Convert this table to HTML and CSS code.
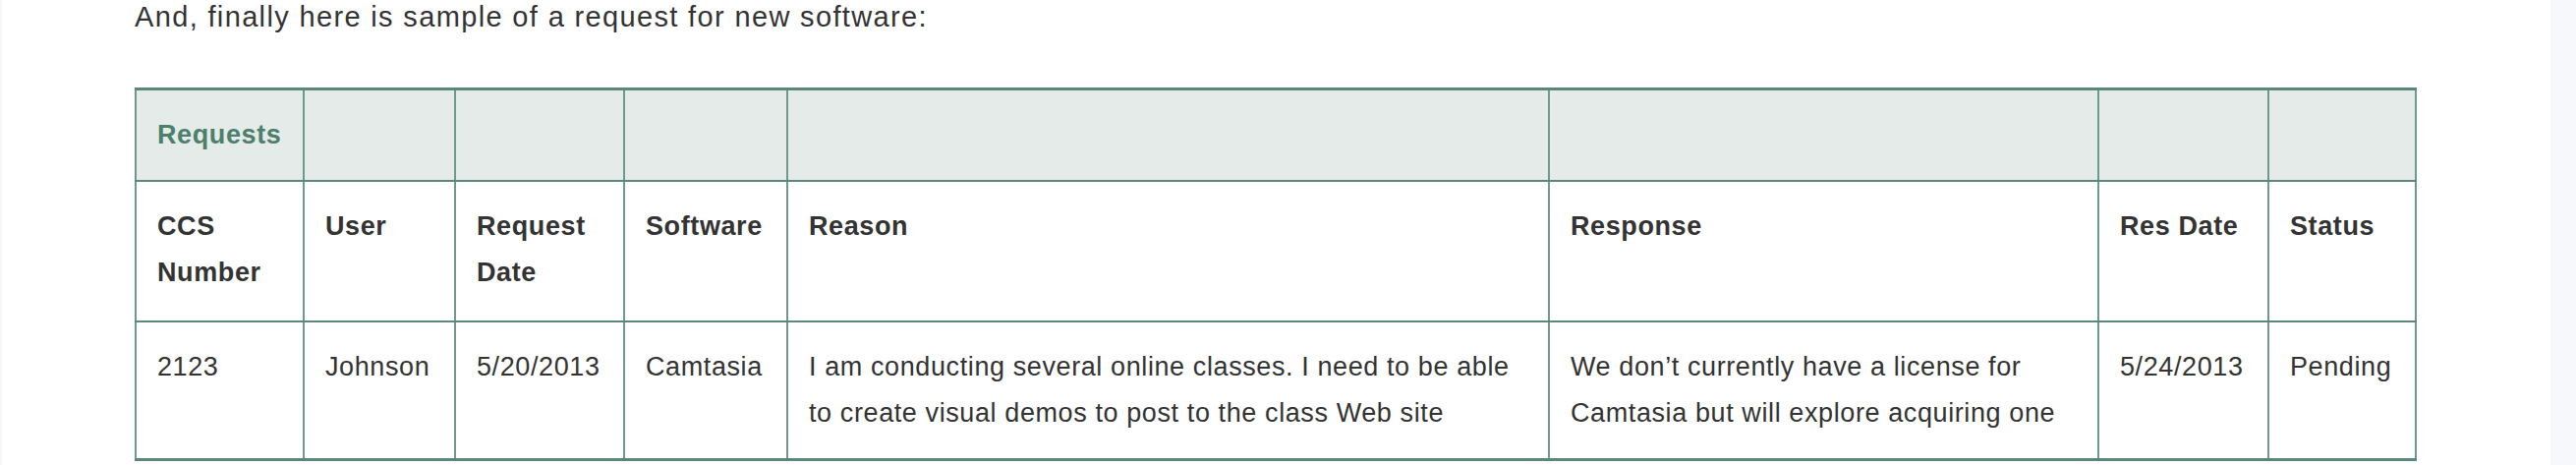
FILE: index.html
```html
<!DOCTYPE html>
<html lang="en">
<head>
<meta charset="utf-8">
<title>Software request sample</title>
<link rel="stylesheet" href="styles.css">
</head>
<body>
<div class="page">
  <main class="content">
    <p class="intro">And, finally here is sample of a request for new software:</p>
    <table class="requests">
      <colgroup>
        <col class="c1"><col class="c2"><col class="c3"><col class="c4">
        <col class="c5"><col class="c6"><col class="c7"><col class="c8">
      </colgroup>
      <thead>
        <tr class="caption-row">
          <th class="caption">Requests</th>
          <th></th><th></th><th></th><th></th><th></th><th></th><th></th>
        </tr>
        <tr class="head-row">
          <th>CCS Number</th>
          <th>User</th>
          <th>Request Date</th>
          <th>Software</th>
          <th>Reason</th>
          <th>Response</th>
          <th>Res Date</th>
          <th>Status</th>
        </tr>
      </thead>
      <tbody>
        <tr>
          <td>2123</td>
          <td>Johnson</td>
          <td>5/20/2013</td>
          <td>Camtasia</td>
          <td>I am conducting several online classes. I need to be able to create visual demos to post to the class Web site</td>
          <td>We don’t currently have a license for Camtasia but will explore acquiring one</td>
          <td>5/24/2013</td>
          <td>Pending</td>
        </tr>
      </tbody>
    </table>
  </main>
  <aside class="rail"></aside>
</div>
</body>
</html>
```

FILE: styles.css
```css
html, body {
  margin: 0;
  padding: 0;
  background: #ffffff;
}

body {
  font-family: "Liberation Sans", Arial, Helvetica, sans-serif;
  color: #333333;
  overflow: hidden;
}

.page {
  display: flex;
  width: 2621px;
  height: 473px;
  border-left: 2px solid #f6f7fb;
  box-sizing: border-box;
}

.content {
  flex: 1;
  padding-left: 135px;
}

.rail {
  width: 26px;
  background: #f7f8fc;
}

.intro {
  margin: -7px 0 0;
  font-size: 29px;
  letter-spacing: 1.35px;
  line-height: 49px;
  color: #333333;
}

.requests {
  margin-top: 47px;
  width: 2320px;
  table-layout: fixed;
  border-collapse: collapse;
  border-top: 3px solid #5b8877;
  border-bottom: 3px solid #5b8877;
  border-left: 2px solid #5b8877;
  border-right: 2px solid #5b8877;
  font-size: 27px;
  letter-spacing: 0.6px;
  line-height: 47px;
}

.c1 { width: 171px; }
.c2 { width: 154px; }
.c3 { width: 172px; }
.c4 { width: 166px; }
.c5 { width: 775px; }
.c6 { width: 559px; }
.c7 { width: 173px; }
.c8 { width: 150px; }

.requests th,
.requests td {
  padding: 22px 14px 22px 21px;
  text-align: left;
  vertical-align: top;
  border-left: 2px solid #6f998a;
  border-right: 2px solid #6f998a;
  border-top: 2px solid #5b8877;
  border-bottom: 2px solid #5b8877;
  color: #333333;
}

.requests th {
  font-weight: bold;
}

.requests td {
  font-weight: normal;
  padding-bottom: 22px;
}

.head-row th {
  padding-bottom: 25px;
}

.caption-row th {
  background: #e4ebe8;
  height: 47px;
}

.caption-row .caption {
  color: #4d7f6c;
}
```
